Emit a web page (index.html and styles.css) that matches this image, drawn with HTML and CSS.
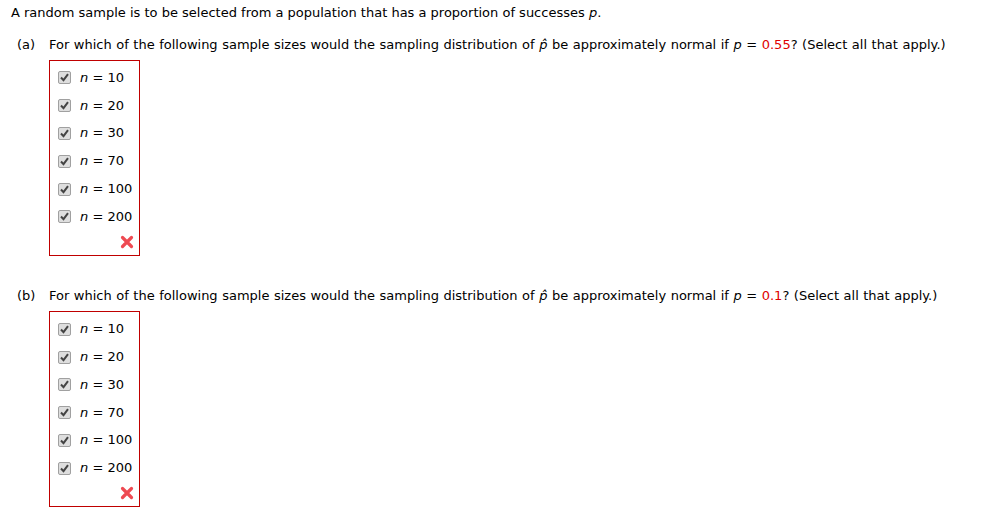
FILE: index.html
```html
<!DOCTYPE html>
<html>
<head>
<meta charset="utf-8">
<link rel="stylesheet" href="styles.css">
</head>
<body>
<div class="page">
  <p class="intro">A random sample is to be selected from a population that has a proportion of successes <i>p</i>.</p>

  <div class="part">
    <span class="label">(a)</span>
    <div class="body">
      <p class="q">For which of the following sample sizes would the sampling distribution of <i>p&#770;</i> be approximately normal if <i>p</i> = <span class="red">0.55</span>? (Select all that apply.)</p>
      <div class="answers">
        <div class="opt"><span class="cb"><svg viewBox="0 0 13 13" width="13" height="13"><path d="M3 6.5 L5.5 9.2 L10 3.2" fill="none" stroke="#444" stroke-width="2"/></svg></span><span class="val"><i>n</i> = 10</span></div>
        <div class="opt"><span class="cb"><svg viewBox="0 0 13 13" width="13" height="13"><path d="M3 6.5 L5.5 9.2 L10 3.2" fill="none" stroke="#444" stroke-width="2"/></svg></span><span class="val"><i>n</i> = 20</span></div>
        <div class="opt"><span class="cb"><svg viewBox="0 0 13 13" width="13" height="13"><path d="M3 6.5 L5.5 9.2 L10 3.2" fill="none" stroke="#444" stroke-width="2"/></svg></span><span class="val"><i>n</i> = 30</span></div>
        <div class="opt"><span class="cb"><svg viewBox="0 0 13 13" width="13" height="13"><path d="M3 6.5 L5.5 9.2 L10 3.2" fill="none" stroke="#444" stroke-width="2"/></svg></span><span class="val"><i>n</i> = 70</span></div>
        <div class="opt"><span class="cb"><svg viewBox="0 0 13 13" width="13" height="13"><path d="M3 6.5 L5.5 9.2 L10 3.2" fill="none" stroke="#444" stroke-width="2"/></svg></span><span class="val"><i>n</i> = 100</span></div>
        <div class="opt"><span class="cb"><svg viewBox="0 0 13 13" width="13" height="13"><path d="M3 6.5 L5.5 9.2 L10 3.2" fill="none" stroke="#444" stroke-width="2"/></svg></span><span class="val"><i>n</i> = 200</span></div>
        <div class="mark"><svg viewBox="0 0 14 14" width="14" height="14"><path d="M2.5 2.5 L11.5 11.5 M11.5 2.5 L2.5 11.5" stroke="#ee4a52" stroke-width="3.2" stroke-linecap="round"/></svg></div>
      </div>
    </div>
  </div>

  <div class="part">
    <span class="label">(b)</span>
    <div class="body">
      <p class="q">For which of the following sample sizes would the sampling distribution of <i>p&#770;</i> be approximately normal if <i>p</i> = <span class="red">0.1</span>? (Select all that apply.)</p>
      <div class="answers">
        <div class="opt"><span class="cb"><svg viewBox="0 0 13 13" width="13" height="13"><path d="M3 6.5 L5.5 9.2 L10 3.2" fill="none" stroke="#444" stroke-width="2"/></svg></span><span class="val"><i>n</i> = 10</span></div>
        <div class="opt"><span class="cb"><svg viewBox="0 0 13 13" width="13" height="13"><path d="M3 6.5 L5.5 9.2 L10 3.2" fill="none" stroke="#444" stroke-width="2"/></svg></span><span class="val"><i>n</i> = 20</span></div>
        <div class="opt"><span class="cb"><svg viewBox="0 0 13 13" width="13" height="13"><path d="M3 6.5 L5.5 9.2 L10 3.2" fill="none" stroke="#444" stroke-width="2"/></svg></span><span class="val"><i>n</i> = 30</span></div>
        <div class="opt"><span class="cb"><svg viewBox="0 0 13 13" width="13" height="13"><path d="M3 6.5 L5.5 9.2 L10 3.2" fill="none" stroke="#444" stroke-width="2"/></svg></span><span class="val"><i>n</i> = 70</span></div>
        <div class="opt"><span class="cb"><svg viewBox="0 0 13 13" width="13" height="13"><path d="M3 6.5 L5.5 9.2 L10 3.2" fill="none" stroke="#444" stroke-width="2"/></svg></span><span class="val"><i>n</i> = 100</span></div>
        <div class="opt"><span class="cb"><svg viewBox="0 0 13 13" width="13" height="13"><path d="M3 6.5 L5.5 9.2 L10 3.2" fill="none" stroke="#444" stroke-width="2"/></svg></span><span class="val"><i>n</i> = 200</span></div>
        <div class="mark"><svg viewBox="0 0 14 14" width="14" height="14"><path d="M2.5 2.5 L11.5 11.5 M11.5 2.5 L2.5 11.5" stroke="#ee4a52" stroke-width="3.2" stroke-linecap="round"/></svg></div>
      </div>
    </div>
  </div>
</div>
</body>
</html>
```

FILE: styles.css
```css
html, body {
  margin: 0;
  padding: 0;
  background: #fff;
}
body {
  font-family: "DejaVu Sans", Verdana, sans-serif;
  font-size: 13px;
  line-height: 18px;
  color: #000;
}
.page {
  padding: 4px 0 0 11px;
}
p {
  margin: 0;
}
.intro {
  margin-bottom: 14px;
}
.part {
  display: flex;
  margin-bottom: 31.6px;
}
.label {
  width: 38px;
  padding-left: 6px;
  box-sizing: border-box;
  flex: none;
}
.body {
  display: flex;
  flex-direction: column;
  align-items: flex-start;
}
.q {
  margin-bottom: 6px;
  word-spacing: 0.4px;
}
.red {
  color: #e00000;
}
.answers {
  width: 91px;
  box-sizing: border-box;
  border: 1px solid #c00000;
  padding: 3px 0 6px 8px;
  display: flex;
  flex-direction: column;
}
.opt {
  display: flex;
  align-items: center;
  height: 27.8px;
}
.cb {
  width: 13px;
  height: 13px;
  box-sizing: border-box;
  border: 1px solid #a0a0a0;
  border-radius: 2px;
  background: #dedede;
  margin-right: 9px;
  position: relative;
  flex: none;
}
.cb svg {
  position: absolute;
  left: -1px;
  top: -1px;
}
.val {
  white-space: pre;
}
.mark {
  display: flex;
  justify-content: flex-end;
  padding-right: 5px;
  margin-top: 4px;
  height: 14px;
}
```
